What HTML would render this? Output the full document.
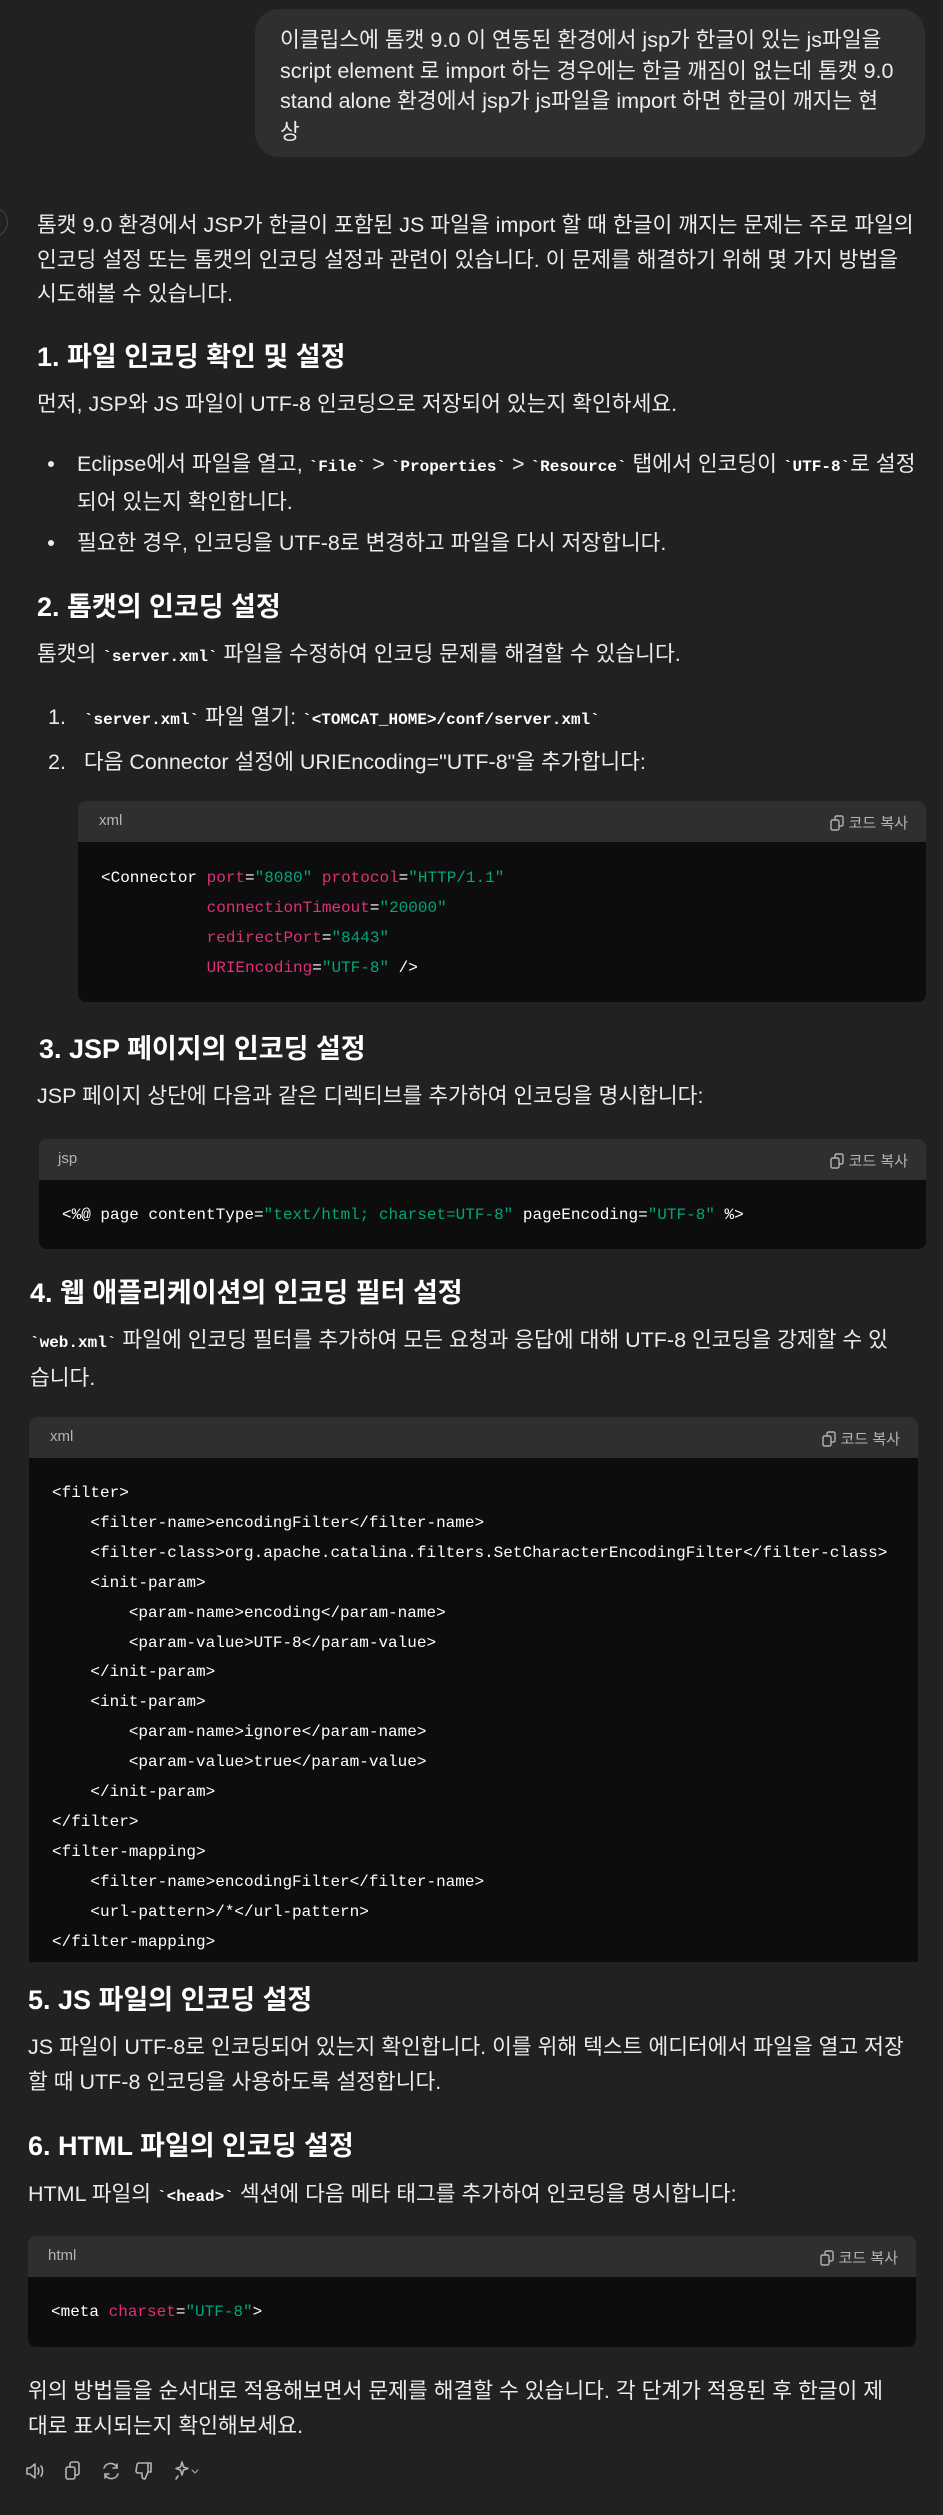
<!DOCTYPE html>
<html><head><meta charset="utf-8"><style>
*{box-sizing:border-box;margin:0;padding:0}
html,body{width:943px;height:2515px;background:#212121;overflow:hidden}
body{position:relative;font-family:"Liberation Sans","Noto Sans CJK KR",sans-serif;color:#ececec;font-size:21.5px}
.a{position:absolute;white-space:nowrap}
.p{line-height:34.5px}
h{position:absolute;white-space:nowrap;font-weight:bold;font-size:27px;line-height:36px;color:#fff}
code{font-family:"Liberation Mono",monospace;font-weight:bold;font-size:16px;color:#fff}
.cb{position:absolute;border-radius:8px;overflow:hidden;background:#0d0d0d}
.ch{height:41px;background:#2f2f2f;position:relative;font-size:15px;color:#b4b4b4}
.ch .l{position:absolute;top:11px}
.ch .r{position:absolute;right:18px;top:11px;display:flex;align-items:center;gap:4px}
.cc{position:absolute;font-family:"Liberation Mono",monospace;font-size:16px;line-height:30px;white-space:pre;color:#fff}
.t{color:#df3079}.v{color:#00a67d}
.dot{position:absolute;width:6px;height:6px;border-radius:50%;background:#ececec}
</style></head><body>

<div class="a" style="left:255px;top:9px;width:670px;height:148px;background:#2f2f2f;border-radius:24px"></div>
<div class="a" style="left:280px;top:25px;line-height:30.5px;font-size:21.5px">이클립스에 톰캣 9.0 이 연동된 환경에서 jsp가 한글이 있는 js파일을<br>script element 로 import 하는 경우에는 한글 깨짐이 없는데 톰캣 9.0<br>stand alone 환경에서 jsp가 js파일을 import 하면 한글이 깨지는 현<br>상</div>

<div class="a" style="left:-22px;top:207px;width:30px;height:30px;border-radius:50%;border:1px solid #444"></div>

<div class="a p" style="left:37px;top:208px">톰캣 9.0 환경에서 JSP가 한글이 포함된 JS 파일을 import 할 때 한글이 깨지는 문제는 주로 파일의<br>인코딩 설정 또는 톰캣의 인코딩 설정과 관련이 있습니다. 이 문제를 해결하기 위해 몇 가지 방법을<br>시도해볼 수 있습니다.</div>

<h style="left:37px;top:339px">1. 파일 인코딩 확인 및 설정</h>
<div class="a p" style="left:37px;top:387px">먼저, JSP와 JS 파일이 UTF-8 인코딩으로 저장되어 있는지 확인하세요.</div>
<div class="dot" style="left:48px;top:461px"></div>
<div class="a p" style="left:77px;top:447px">Eclipse에서 파일을 열고, <code>`File`</code> &gt; <code>`Properties`</code> &gt; <code>`Resource`</code> 탭에서 인코딩이 <code>`UTF-8`</code>로 설정<br>되어 있는지 확인합니다.</div>
<div class="dot" style="left:48px;top:540px"></div>
<div class="a p" style="left:77px;top:526px">필요한 경우, 인코딩을 UTF-8로 변경하고 파일을 다시 저장합니다.</div>

<h style="left:37px;top:589px">2. 톰캣의 인코딩 설정</h>
<div class="a p" style="left:37px;top:637px">톰캣의 <code>`server.xml`</code> 파일을 수정하여 인코딩 문제를 해결할 수 있습니다.</div>
<div class="a p" style="left:48px;top:700px">1.&nbsp;&nbsp; <code>`server.xml`</code> 파일 열기: <code>`&lt;TOMCAT_HOME&gt;/conf/server.xml`</code></div>
<div class="a p" style="left:48px;top:745px">2.&nbsp;&nbsp; 다음 Connector 설정에 URIEncoding="UTF-8"을 추가합니다:</div>

<div class="cb" style="left:78px;top:801px;width:848px;height:201px">
<div class="ch"><span class="l" style="left:21px">xml</span><span class="r"><svg width="16" height="16" viewBox="0 0 16 16" fill="none" stroke="#b4b4b4" stroke-width="1.4"><rect x="2" y="5" width="8" height="10" rx="1.5"/><path d="M6 5V2.5A1.5 1.5 0 0 1 7.5 1h5A1.5 1.5 0 0 1 14 2.5v7a1.5 1.5 0 0 1-1.5 1.5H10"/></svg>코드 복사</span></div>
<div class="cc" style="left:23px;top:62px">&lt;Connector <span class="t">port</span>=<span class="v">"8080"</span> <span class="t">protocol</span>=<span class="v">"HTTP/1.1"</span>
           <span class="t">connectionTimeout</span>=<span class="v">"20000"</span>
           <span class="t">redirectPort</span>=<span class="v">"8443"</span>
           <span class="t">URIEncoding</span>=<span class="v">"UTF-8"</span> /&gt;</div>
</div>

<h style="left:39px;top:1031px">3. JSP 페이지의 인코딩 설정</h>
<div class="a p" style="left:37px;top:1079px">JSP 페이지 상단에 다음과 같은 디렉티브를 추가하여 인코딩을 명시합니다:</div>

<div class="cb" style="left:39px;top:1139px;width:887px;height:110px">
<div class="ch"><span class="l" style="left:19px">jsp</span><span class="r"><svg width="16" height="16" viewBox="0 0 16 16" fill="none" stroke="#b4b4b4" stroke-width="1.4"><rect x="2" y="5" width="8" height="10" rx="1.5"/><path d="M6 5V2.5A1.5 1.5 0 0 1 7.5 1h5A1.5 1.5 0 0 1 14 2.5v7a1.5 1.5 0 0 1-1.5 1.5H10"/></svg>코드 복사</span></div>
<div class="cc" style="left:23px;top:61px">&lt;%@ page contentType=<span class="v">"text/html; charset=UTF-8"</span> pageEncoding=<span class="v">"UTF-8"</span> %&gt;</div>
</div>

<h style="left:30px;top:1275px">4. 웹 애플리케이션의 인코딩 필터 설정</h>
<div class="a p" style="left:30px;top:1323px"><code>`web.xml`</code> 파일에 인코딩 필터를 추가하여 모든 요청과 응답에 대해 UTF-8 인코딩을 강제할 수 있<br>습니다.</div>

<div class="cb" style="left:29px;top:1417px;width:889px;height:545px;border-radius:8px 8px 0 0">
<div class="ch"><span class="l" style="left:21px">xml</span><span class="r"><svg width="16" height="16" viewBox="0 0 16 16" fill="none" stroke="#b4b4b4" stroke-width="1.4"><rect x="2" y="5" width="8" height="10" rx="1.5"/><path d="M6 5V2.5A1.5 1.5 0 0 1 7.5 1h5A1.5 1.5 0 0 1 14 2.5v7a1.5 1.5 0 0 1-1.5 1.5H10"/></svg>코드 복사</span></div>
<div class="cc" style="left:23px;top:62px;line-height:29.9px">&lt;filter&gt;
    &lt;filter-name&gt;encodingFilter&lt;/filter-name&gt;
    &lt;filter-class&gt;org.apache.catalina.filters.SetCharacterEncodingFilter&lt;/filter-class&gt;
    &lt;init-param&gt;
        &lt;param-name&gt;encoding&lt;/param-name&gt;
        &lt;param-value&gt;UTF-8&lt;/param-value&gt;
    &lt;/init-param&gt;
    &lt;init-param&gt;
        &lt;param-name&gt;ignore&lt;/param-name&gt;
        &lt;param-value&gt;true&lt;/param-value&gt;
    &lt;/init-param&gt;
&lt;/filter&gt;
&lt;filter-mapping&gt;
    &lt;filter-name&gt;encodingFilter&lt;/filter-name&gt;
    &lt;url-pattern&gt;/*&lt;/url-pattern&gt;
&lt;/filter-mapping&gt;</div>
</div>

<h style="left:28px;top:1982px">5. JS 파일의 인코딩 설정</h>
<div class="a p" style="left:28px;top:2030px">JS 파일이 UTF-8로 인코딩되어 있는지 확인합니다. 이를 위해 텍스트 에디터에서 파일을 열고 저장<br>할 때 UTF-8 인코딩을 사용하도록 설정합니다.</div>

<h style="left:28px;top:2128px">6. HTML 파일의 인코딩 설정</h>
<div class="a p" style="left:28px;top:2177px">HTML 파일의 <code>`&lt;head&gt;`</code> 섹션에 다음 메타 태그를 추가하여 인코딩을 명시합니다:</div>

<div class="cb" style="left:28px;top:2236px;width:888px;height:111px">
<div class="ch"><span class="l" style="left:20px">html</span><span class="r"><svg width="16" height="16" viewBox="0 0 16 16" fill="none" stroke="#b4b4b4" stroke-width="1.4"><rect x="2" y="5" width="8" height="10" rx="1.5"/><path d="M6 5V2.5A1.5 1.5 0 0 1 7.5 1h5A1.5 1.5 0 0 1 14 2.5v7a1.5 1.5 0 0 1-1.5 1.5H10"/></svg>코드 복사</span></div>
<div class="cc" style="left:23px;top:61px">&lt;meta <span class="t">charset</span>=<span class="v">"UTF-8"</span>&gt;</div>
</div>

<div class="a p" style="left:28px;top:2374px">위의 방법들을 순서대로 적용해보면서 문제를 해결할 수 있습니다. 각 단계가 적용된 후 한글이 제<br>대로 표시되는지 확인해보세요.</div>

<svg class="a" style="left:24px;top:2459px" width="200" height="24" viewBox="0 0 200 24" fill="none" stroke="#b4b4b4" stroke-width="1.6" stroke-linecap="round" stroke-linejoin="round">
<path d="M3 9h3l5-4v14l-5-4H3z"/><path d="M14 9c1 1 1 5 0 6"/><path d="M17 7c2 2 2 8 0 10"/>
<rect x="42" y="8" width="9" height="12" rx="2"/><path d="M46 8V5a2 2 0 0 1 2-2h5a2 2 0 0 1 2 2v9a2 2 0 0 1-2 2h-2"/>
<path d="M80 9a7 7 0 0 1 12-2l1 2"/><path d="M93 5v4h-4"/><path d="M94 15a7 7 0 0 1-12 2l-1-2"/><path d="M81 19v-4h4"/>
<path d="M117 4h7v9l-3 7c-2 0-3-1-3-3v-3h-4a2 2 0 0 1-2-2l1-6a2 2 0 0 1 2-2z"/><path d="M124 4h3v9h-3"/>
<path d="M158 3l1.5 5 4.5 1.5-4.5 1.5-1.5 5-1.5-5-4.5-1.5 4.5-1.5z"/><path d="M154 17l-2 3"/><path d="M168 11l3 3 3-3" stroke-width="1"/>
</svg>
</body></html>
